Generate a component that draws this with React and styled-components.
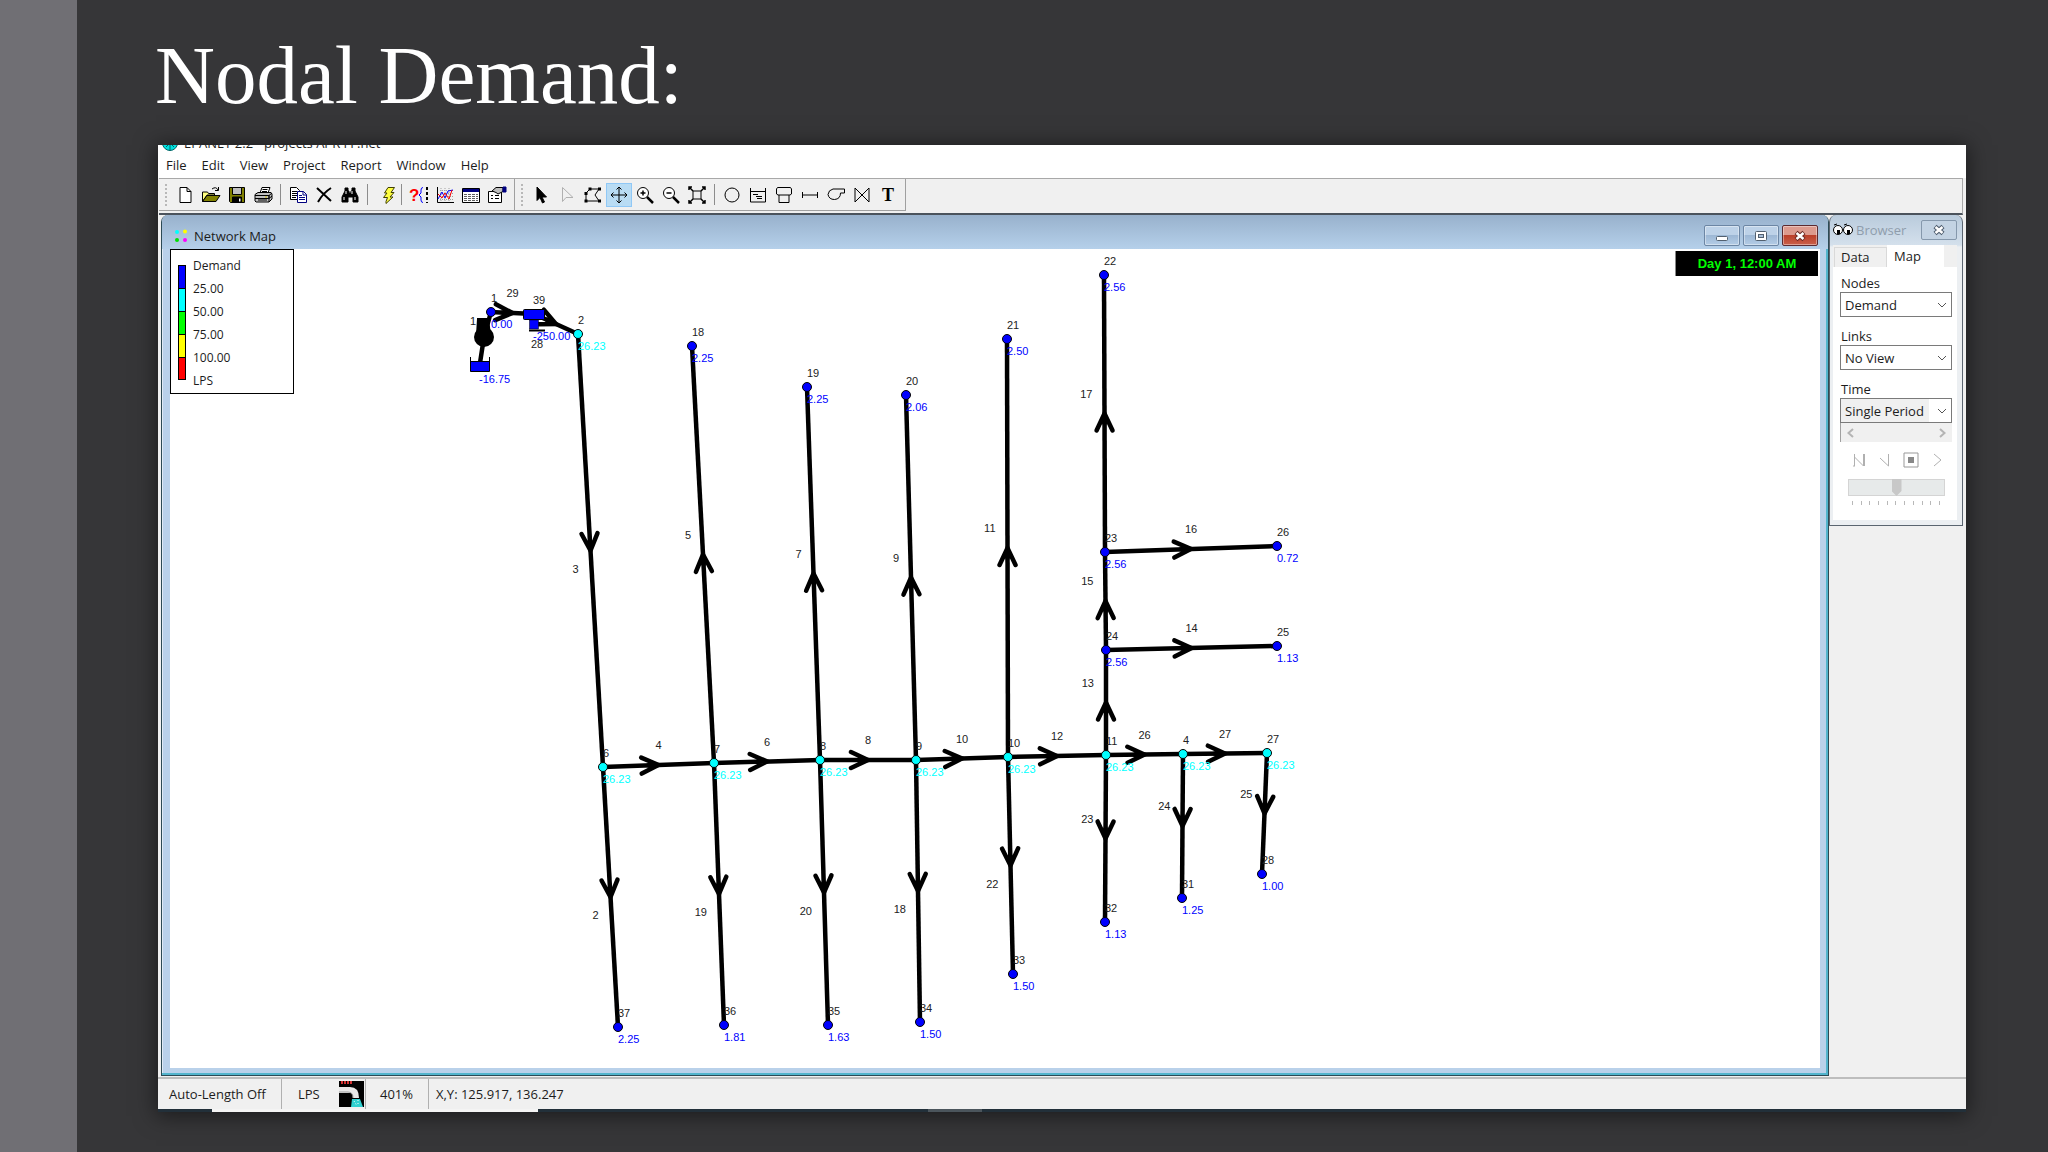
import React, { useState } from "react";
import styled, { createGlobalStyle } from "styled-components";

const NODES = {
    1: { x: 321, y: 63, value: "0.00" },
    2: { x: 408, y: 85, value: "26.23" },
    4: { x: 1013, y: 505, value: "26.23" },
    6: { x: 433, y: 518, value: "26.23" },
    7: { x: 544, y: 514, value: "26.23" },
    8: { x: 650, y: 511, value: "26.23" },
    9: { x: 746, y: 511, value: "26.23" },
    10: { x: 838, y: 508, value: "26.23" },
    11: { x: 936, y: 506, value: "26.23" },
    18: { x: 522, y: 97, value: "2.25" },
    19: { x: 637, y: 138, value: "2.25" },
    20: { x: 736, y: 146, value: "2.06" },
    21: { x: 837, y: 90, value: "2.50" },
    22: { x: 934, y: 26, value: "2.56" },
    23: { x: 935, y: 303, value: "2.56" },
    24: { x: 936, y: 401, value: "2.56" },
    25: { x: 1107, y: 397, value: "1.13" },
    26: { x: 1107, y: 297, value: "0.72" },
    27: { x: 1097, y: 504, value: "26.23" },
    28: { x: 1092, y: 625, value: "1.00" },
    31: { x: 1012, y: 649, value: "1.25" },
    32: { x: 935, y: 673, value: "1.13" },
    33: { x: 843, y: 725, value: "1.50" },
    34: { x: 750, y: 773, value: "1.50" },
    35: { x: 658, y: 776, value: "1.63" },
    36: { x: 554, y: 776, value: "1.81" },
    37: { x: 448, y: 778, value: "2.25" },
}

const TANK = { x: 364, y: 65 }

const LINKS = [
    { id: 3, from: 2, to: 6 },
    { id: 2, from: 6, to: 37 },
    { id: 4, from: 6, to: 7 },
    { id: 5, from: 7, to: 18 },
    { id: 19, from: 7, to: 36 },
    { id: 6, from: 7, to: 8 },
    { id: 7, from: 8, to: 19 },
    { id: 20, from: 8, to: 35 },
    { id: 8, from: 8, to: 9 },
    { id: 9, from: 9, to: 20 },
    { id: 18, from: 9, to: 34 },
    { id: 10, from: 9, to: 10 },
    { id: 11, from: 10, to: 21 },
    { id: 22, from: 10, to: 33 },
    { id: 12, from: 10, to: 11 },
    { id: 13, from: 11, to: 24 },
    { id: 23, from: 11, to: 32 },
    { id: 26, from: 11, to: 4 },
    { id: 14, from: 24, to: 25 },
    { id: 15, from: 24, to: 23 },
    { id: 16, from: 23, to: 26 },
    { id: 17, from: 23, to: 22 },
    { id: 27, from: 4, to: 27 },
    { id: 24, from: 4, to: 31 },
    { id: 25, from: 27, to: 28 },
]

const LEGEND = [
    { color: "#0000ff", label: "Demand" },
    { color: "#00ffff", label: "25.00" },
    { color: "#00ff00", label: "50.00" },
    { color: "#ffff00", label: "75.00" },
    { color: "#ff0000", label: "100.00" },
]

const MENU = ["File", "Edit", "View", "Project", "Report", "Window", "Help"]

function Pipe({ id, a, b, label }) {
    const dx = b.x - a.x
    const dy = b.y - a.y
    const mid = { x: (a.x + b.x) / 2, y: (a.y + b.y) / 2 }
    const angle = Math.atan2(dy, dx) * 180 / Math.PI
    const vertical = Math.abs(dy) > Math.abs(dx)
    const offset = label || {
        x: vertical ? -12 : 0,
        y: vertical && dy > 0 && dx > 0 ? 22 : -16
    }

    return (
        <g>
            <line x1={a.x} y1={a.y} x2={b.x} y2={b.y} stroke="#000" strokeWidth="4.5" />
            <path
                d="M-17 -8 L0 0 L-17 8 M-10 0H0"
                transform={`translate(${mid.x} ${mid.y}) rotate(${angle})`}
                fill="none"
                stroke="#000"
                strokeWidth="4.5"
                strokeLinecap="round"
            />
            <LinkText x={mid.x + offset.x} y={mid.y + offset.y} $end={vertical}>{id}</LinkText>
        </g>
    )
}

function NetworkMap() {
    return (
        <MapSvg viewBox="0 0 1650 818" preserveAspectRatio="xMinYMin meet" role="img" aria-label="Network map">
            <Pipe id={29} a={NODES[1]} b={TANK} />
            <Pipe id={28} a={TANK} b={NODES[2]} label={{ x: -19, y: 24 }} />
            {LINKS.map(({ id, from, to }) => (
                <Pipe key={id} id={id} a={NODES[from]} b={NODES[to]} />
            ))}

            {/* pump between the reservoir and node 1 */}
            <path d="M321 63L314 88L310 114" fill="none" stroke="#000" strokeWidth="4.5" />
            <path d="M308 70h10l2 16h-13z" stroke="#000" strokeWidth="2" />
            <circle cx="314" cy="88" r="10" />
            <LinkText x={303} y={76}>1</LinkText>

            <path d="M300.500 112.500h19v10h-19z" fill="#0000ff" stroke="#000" />
            <path d="M300.500 108v5M319.500 108v5" stroke="#000" />
            <ValueText x={309} y={134}>-16.75</ValueText>

            <rect x="353.500" y="60.500" width="21" height="10" rx="1" fill="#0000ff" stroke="#000" />
            <path d="M359 81.500h16" stroke="#000" strokeWidth="2" />
            <rect x="359.500" y="71" width="9" height="9" fill="#0000ff" stroke="#000" strokeWidth=".5" />
            <NodeText x={363} y={55}>39</NodeText>
            <ValueText x={363} y={91}>-250.00</ValueText>

            {Object.entries(NODES).map(([id, { x, y, value }]) => {
                const color = value === "26.23" ? "#00ffff" : "#0000ff"
                return (
                    <g key={id}>
                        <NodeText x={x} y={y - 10}>{id}</NodeText>
                        <ValueText x={x} y={y + 16} $color={color}>{value}</ValueText>
                        <circle cx={x} cy={y} r="4.500" fill={color} stroke="#000" />
                    </g>
                )
            })}
        </MapSvg>
    )
}

function Icon({ children }) {
    return <IconSvg viewBox="0 0 20 20" aria-hidden="true">{children}</IconSvg>
}

const ICONS = {
    new: <path d="M5 2.500h7l4 4v11H5zM12 2.500v4h4" fill="#fff" />,
    open: <>
        <path d="M1.500 16.500V7h5l1 1.500h6V10H6z" fill="#ffff80" />
        <path d="M1.500 16.500L6 10.500h13l-4 6z" fill="#808000" />
        <path d="M11 4q4-3 6 1M17.500 2v3.500H14" fill="none" />
    </>,
    save: <>
        <path d="M2.500 2.500h15v15h-14l-1-1z" fill="#808000" />
        <path d="M5.500 2.500h9v7h-9z" fill="#c0c0c0" />
        <path d="M5.500 12h9v5.500h-9z" fill="#000" />
        <path d="M12 13.500h1.500v3H12z" fill="#fff" stroke="none" />
    </>,
    print: <>
        <path d="M7 8l2-5.500h8L15 8z" fill="#fff" />
        <path d="M9.500 4.500h5M9 6.500h5" />
        <path d="M2 9.500L5 7.500h13l1 1.500v5l-3 3H3l-1-1z" fill="#c0c0c0" />
        <path d="M2 10.500h14v3H2M16 10.500l3-2.500M16 13.500l3-2.500M5 15h9M16 10v7" fill="none" />
        <path d="M12 12h2" stroke="#d0c000" />
    </>,
    copy: <>
        <path d="M2.500 2.500h6l3 3v9h-9z" fill="#fff" />
        <path d="M4 6.500h5M4 8.500h5M4 10.500h5M4 12.500h4" />
        <path d="M9.500 6.500h6l3 3v8h-9z" fill="#fff" stroke="#000080" />
        <path d="M15 6.500v3.500h3.500M11 10.500h3M11 12.500h6M11 14.500h6" fill="none" stroke="#000080" />
    </>,
    remove: <path d="M3 3l14 13M17 3Q9 8 4 17" fill="none" strokeWidth="2" />,
    find: <>
        <path d="M5 3h3v3h1v2h2V6h1V3h3v3l3 6v5h-5v-5H8v5H2v-5l3-6z" fill="#000" />
        <path d="M6 6v3M4 12v3M12 6v3M15 12v3" stroke="#fff" />
    </>,
    run: <path d="M10 2.500h6.500L13 7.500h3L12 12h3l-7 6.500v-2l1.500-4H5.500L9 8H6.500z" fill="#ffff40" stroke="#404000" />,
    query: <>
        <text x="0" y="16" fontSize="17" fontWeight="700" fontFamily="Liberation Sans, sans-serif" fill="#ff0000" stroke="none">?</text>
        <path d="M14 2.500q-2 0-2 2.500v3l-2 2 2 2v3q0 2.500 2 2.500" fill="none" stroke="#0000ff" />
        <path d="M18 2v16" strokeWidth="2" strokeDasharray="3 2" />
    </>,
    chart: <>
        <path d="M2.500 2v15.500H19" fill="none" />
        <path d="M5 5.500h13M5 8.500h13M5 11.500h13M5 14.500h13M6 3v14M10 3v14M14 3v14" stroke="#a0a0a0" strokeDasharray="1 1" />
        <path d="M3 14l4-7 3 6 3-7 5-1" fill="none" stroke="#0000ff" />
        <path d="M3 9l4 4 3-5 4 6 3-9" fill="none" stroke="#ff0000" />
    </>,
    table: <>
        <path d="M1.500 3.500h17v14h-17z" fill="#fff" />
        <path d="M2 4h16v3H2z" fill="#000080" stroke="none" />
        <path d="M3 9.500h14M3 11.500h14M3 13.500h14M3 15.500h14" stroke="#606060" strokeDasharray="3 1" />
    </>,
    options: <>
        <path d="M1.500 6.500h13v11h-13z" fill="#fff" />
        <path d="M4 10.500h2M4 13.500h2M8 10.500h4M8 13.500h4" />
        <path d="M5 6l4-3.500h7v4l-5 2.500-2-1.500z" fill="#c0c0c0" />
        <path d="M16 2h3v5h-3z" fill="#000080" stroke="#000080" />
    </>,
    select: <path d="M6 2v13.500l3-3L11.500 18l2-1-2.500-5h4.500z" fill="#000" />,
    selectVertex: <path d="M5.500 2.500v14l3.500-4h7z" fill="none" stroke="#b0b0b0" />,
    region: <>
        <path d="M3 8l4-4h9l-4 6 4 6H3z" fill="none" />
        <path d="M1.500 7h3v3h-3zM5.500 2.500h3v3h-3zM15 2.500h3v3h-3zM15 14.500h3v3h-3zM1.500 14.500h3v3h-3z" fill="#000" stroke="none" />
    </>,
    pan: <path d="M10 2v16M2 10h16M7.500 4.500L10 2l2.500 2.500M7.500 15.500L10 18l2.500-2.500M4.500 7.500L2 10l2.500 2.500M15.500 7.500L18 10l-2.500 2.500" fill="none" />,
    zoomIn: <>
        <circle cx="8" cy="8" r="5.500" fill="#fff" />
        <path d="M5.500 8h5M8 5.500v5" strokeWidth="1.500" />
        <path d="M12 12l6 6" strokeWidth="2.500" />
    </>,
    zoomOut: <>
        <circle cx="8" cy="8" r="5.500" fill="#fff" />
        <path d="M5.500 8h5" strokeWidth="1.500" />
        <path d="M12 12l6 6" strokeWidth="2.500" />
    </>,
    full: <>
        <path d="M6 6h8v8H6z" fill="none" />
        <path d="M6 6L2 2M14 6l4-4M6 14l-4 4M14 14l4 4M2 5V2h3M15 2h3v3M2 15v3h3M15 18h3v-3" fill="none" strokeWidth="1.500" />
    </>,
    junction: <circle cx="10" cy="10" r="7" fill="none" />,
    reservoir: <path d="M2.500 3v14h15V3M2.500 6.500h15M5 9.500h5M8 11.500h6M9 13.500h5" fill="none" />,
    tank: <path d="M3.500 2.500h13l1 1.500v5l-1.500 1H4L2.500 9V4zM5 10v7.500h10V10" fill="none" />,
    pipe: <path d="M3 10h14M2.500 7v6M17.500 7v6" fill="none" />,
    pump: <path d="M18.500 4v4h-4q0 6-6 6.500-5.500 0-6.500-5 .5-4.500 5-5.500z" fill="none" />,
    valve: <path d="M3 3v14L17 3v14z" fill="none" />,
    label: <text x="4" y="16" fontSize="18" fontWeight="700" fontFamily="Liberation Serif, serif" stroke="none">T</text>,
}

function Tool({ name, active }) {
    return (
        <ToolButton type="button" aria-label={name} $active={active}>
            <Icon>{ICONS[name]}</Icon>
        </ToolButton>
    )
}

function Dropdown({ id, label, options, $grey }) {
    const [value, setValue] = useState(options[0])

    return (
        <Field>
            <FieldLabel htmlFor={id}>{label}</FieldLabel>
            <SelectWrap>
                <Select id={id} value={value} $grey={$grey} onChange={(e) => setValue(e.target.value)}>
                    {options.map((o) => <option key={o}>{o}</option>)}
                </Select>
                <Chevron viewBox="0 0 10 6" aria-hidden="true">
                    <path d="M1 1l4 4 4-4" fill="none" stroke="#555" />
                </Chevron>
            </SelectWrap>
        </Field>
    )
}

function Browser() {
    const [speed, setSpeed] = useState(5)

    return (
        <BrowserPanel>
            <BrowserTitle>
                <Eyes viewBox="0 0 20 14" aria-hidden="true">
                    <circle cx="5" cy="7" r="4.500" fill="#fff" stroke="#000" />
                    <circle cx="15" cy="7" r="4.500" fill="#fff" stroke="#000" />
                    <path d="M4 7h3v4H4zM14 7h3v4h-3z" />
                    <path d="M1 2l3-1M11 2l3-1" stroke="#000" />
                </Eyes>
                <BrowserName>Browser</BrowserName>
                <PanelClose type="button" aria-label="Close browser"><CrossIcon dark /></PanelClose>
            </BrowserTitle>
            <Tabs role="tablist">
                <Tab type="button" role="tab" aria-selected="false">Data</Tab>
                <Tab type="button" role="tab" aria-selected="true" $active>Map</Tab>
            </Tabs>
            <TabBody>
                <Dropdown id="nodes" label="Nodes" options={["Demand", "Elevation", "Pressure"]} />
                <Dropdown id="links" label="Links" options={["No View", "Length", "Flow"]} />
                <Dropdown id="time" label="Time" options={["Single Period"]} $grey />
                <ScrollBar>
                    <PlainButton type="button" aria-label="Earlier">
                        <SmallSvg viewBox="0 0 12 12"><path d="M8 2L3.500 6L8 10" fill="none" stroke="#b4b4b4" strokeWidth="2" /></SmallSvg>
                    </PlainButton>
                    <PlainButton type="button" aria-label="Later">
                        <SmallSvg viewBox="0 0 12 12"><path d="M4 2l4.500 4L4 10" fill="none" stroke="#b4b4b4" strokeWidth="2" /></SmallSvg>
                    </PlainButton>
                </ScrollBar>
                <Playback>
                    <PlainButton type="button" aria-label="Reset">
                        <PlaySvg viewBox="0 0 16 16"><path d="M3.500 2v12M3.500 5l9 9V2M2 14h2M13.500 2v12" fill="none" stroke="#b0b0b0" /></PlaySvg>
                    </PlainButton>
                    <PlainButton type="button" aria-label="Back">
                        <PlaySvg viewBox="0 0 16 16"><path d="M3 6l8.500 8V2" fill="none" stroke="#b0b0b0" /></PlaySvg>
                    </PlainButton>
                    <PlainButton type="button" aria-label="Stop">
                        <PlaySvg viewBox="0 0 16 16">
                            <path d="M1 1h14v14H1z" fill="none" stroke="#999" />
                            <path d="M5 5h6v6H5z" fill="#888" />
                        </PlaySvg>
                    </PlainButton>
                    <PlainButton type="button" aria-label="Forward">
                        <PlaySvg viewBox="0 0 16 16"><path d="M5 2l7 6-7 6" fill="none" stroke="#b0b0b0" /></PlaySvg>
                    </PlainButton>
                </Playback>
                <Speed
                    type="range"
                    aria-label="Animation speed"
                    min="0"
                    max="10"
                    value={speed}
                    onChange={(e) => setSpeed(Number(e.target.value))}
                />
                <Ticks>
                    {Array.from({ length: 11 }, (_, i) => <Tick key={i} />)}
                </Ticks>
            </TabBody>
        </BrowserPanel>
    )
}

function CrossIcon({ dark }) {
    return (
        <SmallSvg viewBox="0 0 12 12" aria-hidden="true">
            <path d="M2 2.500l8 7M10 2.500l-8 7" stroke={dark ? "#4c5a6b" : "#6b2a24"} strokeWidth="4.500" />
            <path d="M2.500 3l7 6M9.500 3l-7 6" stroke="#fff" strokeWidth="2.500" />
        </SmallSvg>
    )
}

function App() {
    return (
        <>
            <GlobalStyle />
            <Slide>
                <Stripe />
                <Content>
                    <Heading>Nodal Demand:</Heading>
                    <AppWindow>
                        <Caption>
                            <Logo viewBox="0 0 16 16" aria-hidden="true">
                                <circle cx="8" cy="8" r="7.500" fill="#00e0e0" stroke="#066" />
                                <path d="M4 12l4-4 4 4M8 8v8" fill="none" stroke="#066" />
                            </Logo>
                            <CaptionText>EPANET 2.2 - projects APR FF.net</CaptionText>
                        </Caption>
                        <MenuBar>
                            {MENU.map((item) => <MenuItem key={item} type="button">{item}</MenuItem>)}
                        </MenuBar>
                        <ToolBar>
                            <Band>
                                <Grip />
                                <Tool name="new" />
                                <Tool name="open" />
                                <Tool name="save" />
                                <Tool name="print" />
                                <Separator />
                                <Tool name="copy" />
                                <Tool name="remove" />
                                <Tool name="find" />
                                <Separator $after={7} />
                                <Tool name="run" />
                                <Separator $before={0} />
                                <Tool name="query" />
                                <Tool name="chart" />
                                <Tool name="table" />
                                <Tool name="options" />
                            </Band>
                            <Band>
                                <Grip />
                                <Tool name="select" />
                                <Tool name="selectVertex" />
                                <Tool name="region" />
                                <Tool name="pan" active />
                                <Tool name="zoomIn" />
                                <Tool name="zoomOut" />
                                <Tool name="full" />
                                <Separator />
                                <Tool name="junction" />
                                <Tool name="reservoir" />
                                <Tool name="tank" />
                                <Tool name="pipe" />
                                <Tool name="pump" />
                                <Tool name="valve" />
                                <Tool name="label" />
                            </Band>
                        </ToolBar>
                        <Workspace>
                            <MapWindow>
                                <MapTitle>
                                    <Dots viewBox="0 0 14 14" aria-hidden="true">
                                        <circle cx="3" cy="3" r="2" fill="#00ffff" />
                                        <circle cx="11" cy="2.500" r="2" fill="#ffff00" />
                                        <circle cx="3" cy="11" r="2" fill="#00e000" />
                                        <circle cx="11" cy="11" r="2" fill="#ff00ff" />
                                    </Dots>
                                    <MapName>Network Map</MapName>
                                    <CaptionButton type="button" aria-label="Minimize">
                                        <SmallSvg viewBox="0 0 12 12"><rect x=".5" y="6.500" width="11" height="4" rx="1" fill="#fff" stroke="#52606f" /></SmallSvg>
                                    </CaptionButton>
                                    <CaptionButton type="button" aria-label="Restore">
                                        <SmallSvg viewBox="0 0 12 12">
                                            <rect x=".5" y="1.500" width="11" height="9" rx="1" fill="#fff" stroke="#52606f" />
                                            <rect x="3.500" y="4.500" width="5" height="3" fill="#a9bfd8" stroke="#52606f" />
                                        </SmallSvg>
                                    </CaptionButton>
                                    <CaptionButton type="button" aria-label="Close" $close><CrossIcon /></CaptionButton>
                                </MapTitle>
                                <MapArea>
                                    <NetworkMap />
                                    <Legend>
                                        <ColorBar>
                                            {LEGEND.map(({ color }) => <Swatch key={color} $color={color} />)}
                                        </ColorBar>
                                        <LegendList>
                                            {LEGEND.map(({ label }) => <li key={label}>{label}</li>)}
                                            <li>LPS</li>
                                        </LegendList>
                                    </Legend>
                                    <Clock>Day 1, 12:00 AM</Clock>
                                </MapArea>
                            </MapWindow>
                            <Browser />
                        </Workspace>
                        <StatusBar>
                            <Status $width={124}>Auto-Length Off</Status>
                            <Status $width={84} $pad={16}>
                                LPS
                                <Faucet viewBox="0 0 25 26" aria-hidden="true">
                                    <path d="M0 0h25v26H0z" />
                                    <path d="M2 1.500h11" stroke="#d03030" strokeWidth="3" strokeDasharray="2 1" />
                                    <path d="M0 9h11q6 0 6 8" fill="none" stroke="#e8e8e8" strokeWidth="6" />
                                    <path d="M0 11h9q5 0 5 6" fill="none" stroke="#999" />
                                    <path d="M13 18h8l3 8H12z" fill="#30d0d0" />
                                    <path d="M15 20l3 5M19 19v6" stroke="#fff" strokeDasharray="1 2" />
                                </Faucet>
                            </Status>
                            <Status $width={63} $pad={14}>401%</Status>
                            <Status $pad={7}>X,Y: 125.917, 136.247</Status>
                        </StatusBar>
                        <TaskBar>
                            <TaskItem $width={326} $gap={54} $color="#f4f4f4" />
                            <TaskItem $width={54} $gap={390} $color="#4b555c" />
                        </TaskBar>
                    </AppWindow>
                </Content>
            </Slide>
        </>
    )
}

export default App;

const GlobalStyle = createGlobalStyle`
    * {
        box-sizing: border-box;
    }
    body {
        margin: 0;
        background: #363638;
        font-family: "Open Sans", "Noto Sans", sans-serif;
        font-size: 13px;
        color: #1c1c1c;
    }
    button, select {
        font: inherit;
        color: inherit;
    }
`
const Slide = styled.div`
    display: flex;
    min-height: 100vh;
`
const Stripe = styled.div`
    width: 77px;
    background: #706f74;
`
const Content = styled.main`
    flex: 1;
    display: flex;
    flex-direction: column;
    padding: 30px 82px 40px 81px;
`
const Heading = styled.h1`
    margin: 0;
    padding-bottom: 25px;
    font: 400 83px/90px "Liberation Serif", "Times New Roman", serif;
    color: #fff;
    text-indent: -3px;
`
const AppWindow = styled.section`
    flex: 1;
    display: flex;
    flex-direction: column;
    background: #f0f0f0;
    box-shadow: 0 2px 20px 2px rgba(0, 0, 0, 0.5);
`
const Caption = styled.div`
    display: flex;
    align-items: flex-end;
    gap: 6px;
    height: 6px;
    padding-left: 4px;
    overflow: hidden;
    background: #fff;
`
const Logo = styled.svg`
    flex: none;
    width: 16px;
    height: 16px;
`
const CaptionText = styled.span`
    line-height: 16px;
`
const MenuBar = styled.nav`
    display: flex;
    gap: 15px;
    height: 27px;
    padding: 1px 8px 0;
    background: #fff;
`
const MenuItem = styled.button`
    padding: 0;
    border: none;
    background: none;
`
const ToolBar = styled.div`
    display: flex;
    height: 37px;
    margin: 0 3px 0 1px;
    border-top: 1px solid #a8a8a8;
    border-right: 1px solid #a8a8a8;
    border-bottom: 2px solid #4b535c;
`
const Band = styled.div`
    display: flex;
    align-items: center;
    height: 31px;
    padding: 0 4px;
    border-right: 1px solid #a0a0a0;
    box-shadow: 0 1px #a0a0a0;
`
const Grip = styled.span`
    width: 2px;
    height: 22px;
    margin: 0 5px 0 2px;
    background: repeating-linear-gradient(#b8b8b8 0 2px, transparent 2px 4px);
`
const ToolButton = styled.button`
    display: flex;
    align-items: center;
    justify-content: center;
    width: 26px;
    height: 24px;
    padding: 0;
    border: 1px solid ${({ $active }) => $active ? "#90c8f6" : "transparent"};
    background: ${({ $active }) => $active ? "#b9dcf4" : "none"};
`
const Separator = styled.span`
    width: 1px;
    height: 21px;
    margin: 0 ${({ $after = 4 }) => $after}px 0 ${({ $before = 4 }) => $before}px;
    background: #8c8c8c;
`
const IconSvg = styled.svg`
    width: 20px;
    height: 20px;
    stroke: #000;
`
const Workspace = styled.div`
    flex: 1;
    display: flex;
    padding: 0 3px 1px;
`
const MapWindow = styled.section`
    flex: 1;
    display: flex;
    flex-direction: column;
    padding: 0 8px 7px;
    border: 1px solid #2c4a55;
    border-top: none;
    border-radius: 7px 7px 0 0;
    background: #b9d1ea;
    box-shadow: inset -2px -2px #52b4cc, inset 1px 0 #dfeaf5;
`
const MapTitle = styled.header`
    display: flex;
    align-items: center;
    gap: 3px;
    height: 34px;
    margin: 0 -8px;
    padding: 7px 10px 0 12px;
    border-radius: 6px 6px 0 0;
    background: linear-gradient(#98b1cc, #b5d0ea);
`
const Dots = styled.svg`
    width: 14px;
    height: 14px;
    margin-right: 3px;
`
const MapName = styled.span`
    flex: 1;
`
const CaptionButton = styled.button`
    display: flex;
    align-items: center;
    justify-content: center;
    width: 36px;
    height: 21px;
    padding: 0;
    border: 1px solid ${({ $close }) => $close ? "#5c2a30" : "#6c86a4"};
    border-radius: 2px;
    background: ${({ $close }) => $close
        ? "linear-gradient(#dc9a8e 0 45%, #bb3f2a 50%, #c9604a)"
        : "linear-gradient(#bdd2e8 0 45%, #9db8d5 50%, #b3cce6)"};
    box-shadow: inset 0 0 0 1px rgba(255, 255, 255, 0.4);
`
const SmallSvg = styled.svg`
    width: 12px;
    height: 12px;
`
const MapArea = styled.div`
    position: relative;
    flex: 1;
    background: #fff;
`
const MapSvg = styled.svg`
    display: block;
    width: 100%;
    height: auto;
`
const NodeText = styled.text`
    font: 11px "Liberation Sans", Arial, sans-serif;
    fill: #222;
`
const LinkText = styled(NodeText)`
    text-anchor: ${({ $end }) => $end ? "end" : "middle"};
`
const ValueText = styled(NodeText)`
    fill: ${({ $color = "#0000ff" }) => $color};
`
const Legend = styled.div`
    position: absolute;
    top: 0;
    left: 0;
    display: flex;
    gap: 7px;
    width: 124px;
    padding: 4px 7px 1px;
    border: 1px solid #000;
    background: #fff;
    font-size: 12px;
    line-height: 23px;
`
const ColorBar = styled.div`
    width: 8px;
    margin: 11px 0;
`
const Swatch = styled.div`
    height: 23px;
    border: 1px solid #000;
    border-bottom-width: 0;
    background: ${({ $color }) => $color};

    &:last-child {
        border-bottom-width: 1px;
    }
`
const LegendList = styled.ul`
    margin: 0;
    padding: 0;
    list-style: none;
`
const Clock = styled.div`
    position: absolute;
    top: 2px;
    right: 2px;
    width: 143px;
    border-left: 1px solid #888;
    background: #000;
    color: #00ff00;
    font: 700 13px/25px "Liberation Sans", Arial, sans-serif;
    text-align: center;
`
const BrowserPanel = styled.aside`
    display: flex;
    flex-direction: column;
    align-self: flex-start;
    width: 134px;
    padding: 0 5px 5px 3px;
    border: 1px solid #5b6570;
    border-top: none;
    border-radius: 7px 7px 0 0;
    background: linear-gradient(#b9cbdc, #d4e0ec 30px, #eceff2 32px);
`
const BrowserTitle = styled.header`
    display: flex;
    align-items: center;
    gap: 3px;
    height: 30px;
    color: #8f9dac;
`
const Eyes = styled.svg`
    width: 20px;
    height: 14px;
`
const BrowserName = styled.span`
    flex: 1;
`
const PanelClose = styled.button`
    display: flex;
    align-items: center;
    justify-content: center;
    width: 36px;
    height: 20px;
    padding: 0;
    border: 1px solid #8598ac;
    border-radius: 2px;
    background: #c3d3e3;
`
const Tabs = styled.div`
    display: flex;
    align-items: flex-end;
    height: 22px;
    padding-left: 1px;
    background: #f0f0f0;
`
const Tab = styled.button`
    width: ${({ $active }) => $active ? 57 : 53}px;
    height: ${({ $active }) => $active ? 22 : 20}px;
    padding: 0 6px 2px;
    border: 1px solid ${({ $active }) => $active ? "#fff" : "#d9d9d9"};
    border-bottom: none;
    background: ${({ $active }) => $active ? "#fff" : "#f0f0f0"};
    text-align: left;
    line-height: 16px;
`
const TabBody = styled.div`
    display: flex;
    flex-direction: column;
    padding: 8px 5px 15px 7px;
    background: #fff;
`
const Field = styled.div`
    display: flex;
    flex-direction: column;
    margin-bottom: 11px;
`
const FieldLabel = styled.label`
    padding-left: 1px;
    line-height: 17px;
`
const SelectWrap = styled.div`
    display: grid;
    align-items: center;

    > * {
        grid-area: 1 / 1;
    }
`
const Select = styled.select`
    appearance: none;
    width: 100%;
    height: 25px;
    padding: 0 4px;
    border: 1px solid #7a7a7a;
    border-radius: 0;
    background: ${({ $grey }) => $grey ? "linear-gradient(90deg, #f0f0f0 88px, #fff 88px)" : "#fff"};
`
const Chevron = styled.svg`
    justify-self: end;
    width: 10px;
    height: 6px;
    margin-right: 5px;
    pointer-events: none;
`
const ScrollBar = styled.div`
    display: flex;
    justify-content: space-between;
    align-items: center;
    height: 19px;
    margin-top: -11px;
    padding: 0 4px;
    border-left: 1px solid #a0a0a0;
    background: #f0f0f0;
`
const PlainButton = styled.button`
    display: flex;
    padding: 0;
    border: none;
    background: none;
`
const Playback = styled.div`
    display: flex;
    justify-content: space-between;
    padding: 10px 7px 11px 11px;
`
const PlaySvg = styled.svg`
    width: 16px;
    height: 16px;
`
const Speed = styled.input`
    appearance: none;
    width: 97px;
    height: 17px;
    margin: 0 8px;
    border: 1px solid #d4d4d4;
    background: #e7eaea;

    &::-webkit-slider-thumb {
        appearance: none;
        width: 10px;
        height: 17px;
        background: #c8c8c8;
        clip-path: polygon(0 0, 100% 0, 100% 70%, 50% 100%, 0 70%);
    }
`
const Ticks = styled.div`
    display: flex;
    justify-content: space-between;
    padding: 5px 12px 0;
`
const Tick = styled.span`
    width: 1px;
    height: 4px;
    background: #b8b8b8;
`
const StatusBar = styled.footer`
    display: flex;
    align-items: stretch;
    height: 32px;
    border-top: 2px solid #bdbdbd;
`
const Status = styled.div`
    display: flex;
    align-items: center;
    justify-content: space-between;
    ${({ $width }) => $width ? `width: ${$width}px;` : "flex: 1;"}
    padding-left: ${({ $pad = 11 }) => $pad}px;
    border-right: 1px solid #b0b0b0;

    &:last-child {
        border-right: none;
    }
`
const Faucet = styled.svg`
    width: 25px;
    height: 26px;
    margin-right: 1px;
`
const TaskBar = styled.div`
    display: flex;
    height: 3px;
    background: #22303a;
`
const TaskItem = styled.span`
    width: ${({ $width }) => $width}px;
    margin-left: ${({ $gap }) => $gap}px;
    background: ${({ $color }) => $color};
`
